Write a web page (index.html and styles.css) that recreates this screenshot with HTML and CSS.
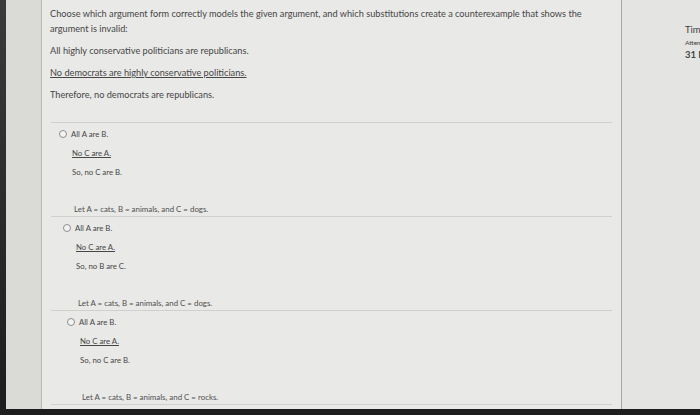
FILE: index.html
```html
<!DOCTYPE html>
<html lang="en">
<head>
<meta charset="utf-8">
<title>Quiz question</title>
<link rel="stylesheet" href="styles.css">
</head>
<body>
<div class="screen">
  <div class="row">
    <div class="bezel-left"></div>
    <div class="gutter"></div>
    <main class="main">
      <p class="q title">Choose which argument form correctly models the given argument, and which substitutions create a counterexample that shows the argument is invalid:</p>
      <p class="q">All highly conservative politicians are republicans.</p>
      <p class="q"><span class="u">No democrats are highly conservative politicians.</span></p>
      <p class="q">Therefore, no democrats are republicans.</p>

      <div class="options">
        <div class="option o1">
          <div class="opt-head"><span class="radio"></span><span>All A are B.</span></div>
          <p class="line"><span class="u">No C are A.</span></p>
          <p class="line">So, no C are B.</p>
          <p class="let">Let A = cats, B = animals, and C = dogs.</p>
        </div>
        <div class="option o2">
          <div class="opt-head"><span class="radio"></span><span>All A are B.</span></div>
          <p class="line"><span class="u">No C are A.</span></p>
          <p class="line">So, no B are C.</p>
          <p class="let">Let A = cats, B = animals, and C = dogs.</p>
        </div>
        <div class="option o3">
          <div class="opt-head"><span class="radio"></span><span>All A are B.</span></div>
          <p class="line"><span class="u">No C are A.</span></p>
          <p class="line">So, no C are B.</p>
          <p class="let">Let A = cats, B = animals, and C = rocks.</p>
        </div>
      </div>
    </main>
    <aside class="sidebar">
      <div class="s-time">Time</div>
      <div class="s-att">Attempt due</div>
      <div class="s-num">31 Minutes</div>
    </aside>
  </div>
  <div class="bezel-bottom"></div>
</div>
</body>
</html>
```

FILE: styles.css
```css
html, body {
  margin: 0;
  padding: 0;
  background: #1f1f1f;
}
body {
  width: 700px;
  height: 415px;
  overflow: hidden;
  font-family: Lato, "Open Sans", "Liberation Sans", sans-serif;
  color: #464646;
}
.screen {
  width: 700px;
  height: 415px;
  display: flex;
  flex-direction: column;
}
.row {
  flex: 1;
  display: flex;
  min-height: 0;
  background: #e6e6e4;
}
.bezel-left {
  width: 6px;
  background: linear-gradient(#3a3a3a, #1c1c1c);
}
.gutter {
  width: 35px;
  background: #dadad7;
  border-right: 1px solid #b8b8b5;
}
.main {
  width: 579px;
  background: #e9e9e7;
  padding: 6px 9px 0 8px;
  box-sizing: border-box;
}
.q {
  margin: 0 0 7px 0;
  font-size: 9.2px;
  line-height: 15px;
}
.q.title {
  width: 556px;
}
.u {
  text-decoration: underline;
  text-decoration-thickness: 0.5px;
  text-underline-offset: 1px;
}
.options {
  margin-top: 20px;
  margin-left: 1px;
  border-top: 1px solid #d0d0cd;
}
.option {
  border-bottom: 1px solid #d0d0cd;
  padding: 5px 0 3px 0;
  height: 94px;
  box-sizing: border-box;
}
.opt-head {
  display: flex;
  align-items: center;
  gap: 4px;
  padding-left: 8px;
  font-size: 7.8px;
  line-height: 12px;
  height: 12px;
}
.radio {
  width: 6px;
  height: 6px;
  border: 1px solid #8e8e8c;
  border-radius: 50%;
  background: #f3f3f1;
  flex: none;
}
.line {
  margin: 7px 0 0 21px;
  font-size: 7.8px;
  line-height: 12px;
  height: 12px;
}
.let {
  margin: 25px 0 0 23px;
  font-size: 7.9px;
  line-height: 12px;
  color: #505050;
}
.o2 .opt-head { padding-left: 12px; }
.o2 .line { margin-left: 25px; }
.o2 .let { margin-left: 27px; }
.o3 .opt-head { padding-left: 16px; }
.o3 .line { margin-left: 29px; }
.o3 .let { margin-left: 31px; }
.sidebar {
  flex: 1;
  background: #e4e4e2;
  border-left: 1px solid #a8a8a6;
  padding: 23px 0 0 63px;
  overflow: hidden;
  white-space: nowrap;
  color: #3c3c3c;
}
.s-time {
  font-size: 9.5px;
  line-height: 13px;
}
.s-att {
  font-size: 6.5px;
  line-height: 10px;
  margin-top: 2px;
}
.s-num {
  font-size: 9.5px;
  line-height: 13px;
  font-weight: 700;
  color: #444;
}
.bezel-bottom {
  height: 6px;
  background: #1d1d1d;
  margin-left: 10px;
  border-top-left-radius: 4px;
}
```
